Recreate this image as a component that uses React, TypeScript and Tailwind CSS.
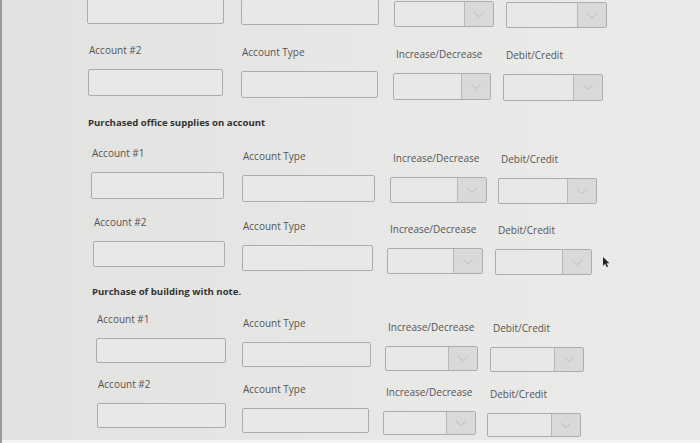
import React from 'react';

type FieldProps = {
  label?: string;
  select?: boolean;
  className?: string;
  inputClass?: string;
};

function Field({ label, select, className = '', inputClass = 'h-[26px]' }: FieldProps) {
  return (
    <div className={`flex flex-col shrink-0 ${className}`}>
      {label && (
        <span
          className={`block h-[14px] leading-[14px] text-[10px] text-[#555] whitespace-nowrap ${
            select ? 'pl-[3px]' : 'pl-[1px]'
          }`}
        >
          {label}
        </span>
      )}
      <div
        className={`${label ? 'mt-[12px]' : ''} ${inputClass} w-full flex border border-[#acacaa] rounded-[2px] bg-[#e8e8e6] overflow-hidden`}
      >
        {select && (
          <>
            <div className="flex-1" />
            <div className="w-[29px] border-l border-[#b8b8b6] bg-[#d9d9d7] flex items-center justify-center">
              <svg width="12" height="7" viewBox="0 0 12 7" fill="none">
                <path d="M1 1l5 4.6L11 1" stroke="#bdbdbb" strokeWidth="1" />
              </svg>
            </div>
          </>
        )}
      </div>
    </div>
  );
}

function Heading({ children, className = '' }: { children: React.ReactNode; className?: string }) {
  return (
    <div className={`h-[14px] leading-[14px] text-[9.6px] font-bold text-[#333] whitespace-nowrap ${className}`}>
      {children}
    </div>
  );
}

export default function App() {
  return (
    <div
      className="relative w-[700px] h-[443px] overflow-hidden bg-gradient-to-r from-[#e2e2e0] via-[#e7e7e5] to-[#ebebe9] border-l-[2px] border-[#9a9a98]"
      style={{ fontFamily: '"Open Sans", "Noto Sans", sans-serif' }}
    >
      <div className="flex flex-col">
        {/* top row, cut off */}
        <div className="flex items-start pl-[85px] mt-[-2px]">
          <Field className="w-[137px]" />
          <Field className="w-[138px] ml-[17px] mt-[1px]" />
          <Field select className="w-[100px] ml-[15px] mt-[3px]" />
          <Field select className="w-[101px] ml-[12px] mt-[4px]" />
        </div>

        <div className="flex items-start pl-[86px] mt-[15px]">
          <Field label="Account #2" className="w-[135px]" inputClass="h-[27px]" />
          <Field label="Account Type" className="w-[137px] ml-[18px] mt-[2px]" inputClass="h-[27px]" />
          <Field label="Increase/Decrease" select className="w-[98px] ml-[15px] mt-[4px]" inputClass="h-[27px]" />
          <Field label="Debit/Credit" select className="w-[100px] ml-[12px] mt-[5px]" inputClass="h-[27px]" />
        </div>

        <Heading className="pl-[86px] mt-[15px]">Purchased office supplies on account</Heading>

        <div className="flex items-start pl-[89px] mt-[16px]">
          <Field label="Account #1" className="w-[133px]" inputClass="h-[27px]" />
          <Field label="Account Type" className="w-[133px] ml-[18px] mt-[3px]" inputClass="h-[27px]" />
          <Field label="Increase/Decrease" select className="w-[97px] ml-[15px] mt-[5px]" inputClass="h-[26px]" />
          <Field label="Debit/Credit" select className="w-[99px] ml-[11px] mt-[6px]" inputClass="h-[26px]" />
        </div>

        <div className="flex items-start pl-[91px] mt-[11px]">
          <Field label="Account #2" className="w-[132px]" />
          <Field label="Account Type" className="w-[131px] ml-[17px] mt-[4px]" />
          <Field label="Increase/Decrease" select className="w-[96px] ml-[14px] mt-[7px]" />
          <Field label="Debit/Credit" select className="w-[97px] ml-[12px] mt-[8px]" />
        </div>

        <Heading className="pl-[90px] mt-[10px]">Purchase of building with note.</Heading>

        <div className="flex items-start pl-[94px] mt-[13px]">
          <Field label="Account #1" className="w-[130px]" inputClass="h-[25px]" />
          <Field label="Account Type" className="w-[129px] ml-[16px] mt-[4px]" inputClass="h-[25px]" />
          <Field label="Increase/Decrease" select className="w-[93px] ml-[14px] mt-[8px]" inputClass="h-[25px]" />
          <Field label="Debit/Credit" select className="w-[94px] ml-[12px] mt-[9px]" inputClass="h-[25px]" />
        </div>

        <div className="flex items-start pl-[95px] mt-[5px]">
          <Field label="Account #2" className="w-[129px]" inputClass="h-[25px]" />
          <Field label="Account Type" className="w-[127px] ml-[16px] mt-[5px]" inputClass="h-[25px]" />
          <Field label="Increase/Decrease" select className="w-[93px] ml-[14px] mt-[8px]" inputClass="h-[24px]" />
          <Field label="Debit/Credit" select className="w-[94px] ml-[11px] mt-[10px]" inputClass="h-[24px]" />
        </div>
      </div>

      {/* mouse pointer */}
      <svg className="absolute left-[600px] top-[256px]" width="8" height="12" viewBox="0 0 8 12">
        <path d="M1 1v9l2.2-2.2 1.6 3.4 1.3-.6-1.6-3.3H7.4z" fill="#222" />
      </svg>

      {/* bottom edge of the screen */}
      <div className="absolute left-0 right-0 bottom-0 h-[3px] bg-[#f4f4f2]" />
    </div>
  );
}
